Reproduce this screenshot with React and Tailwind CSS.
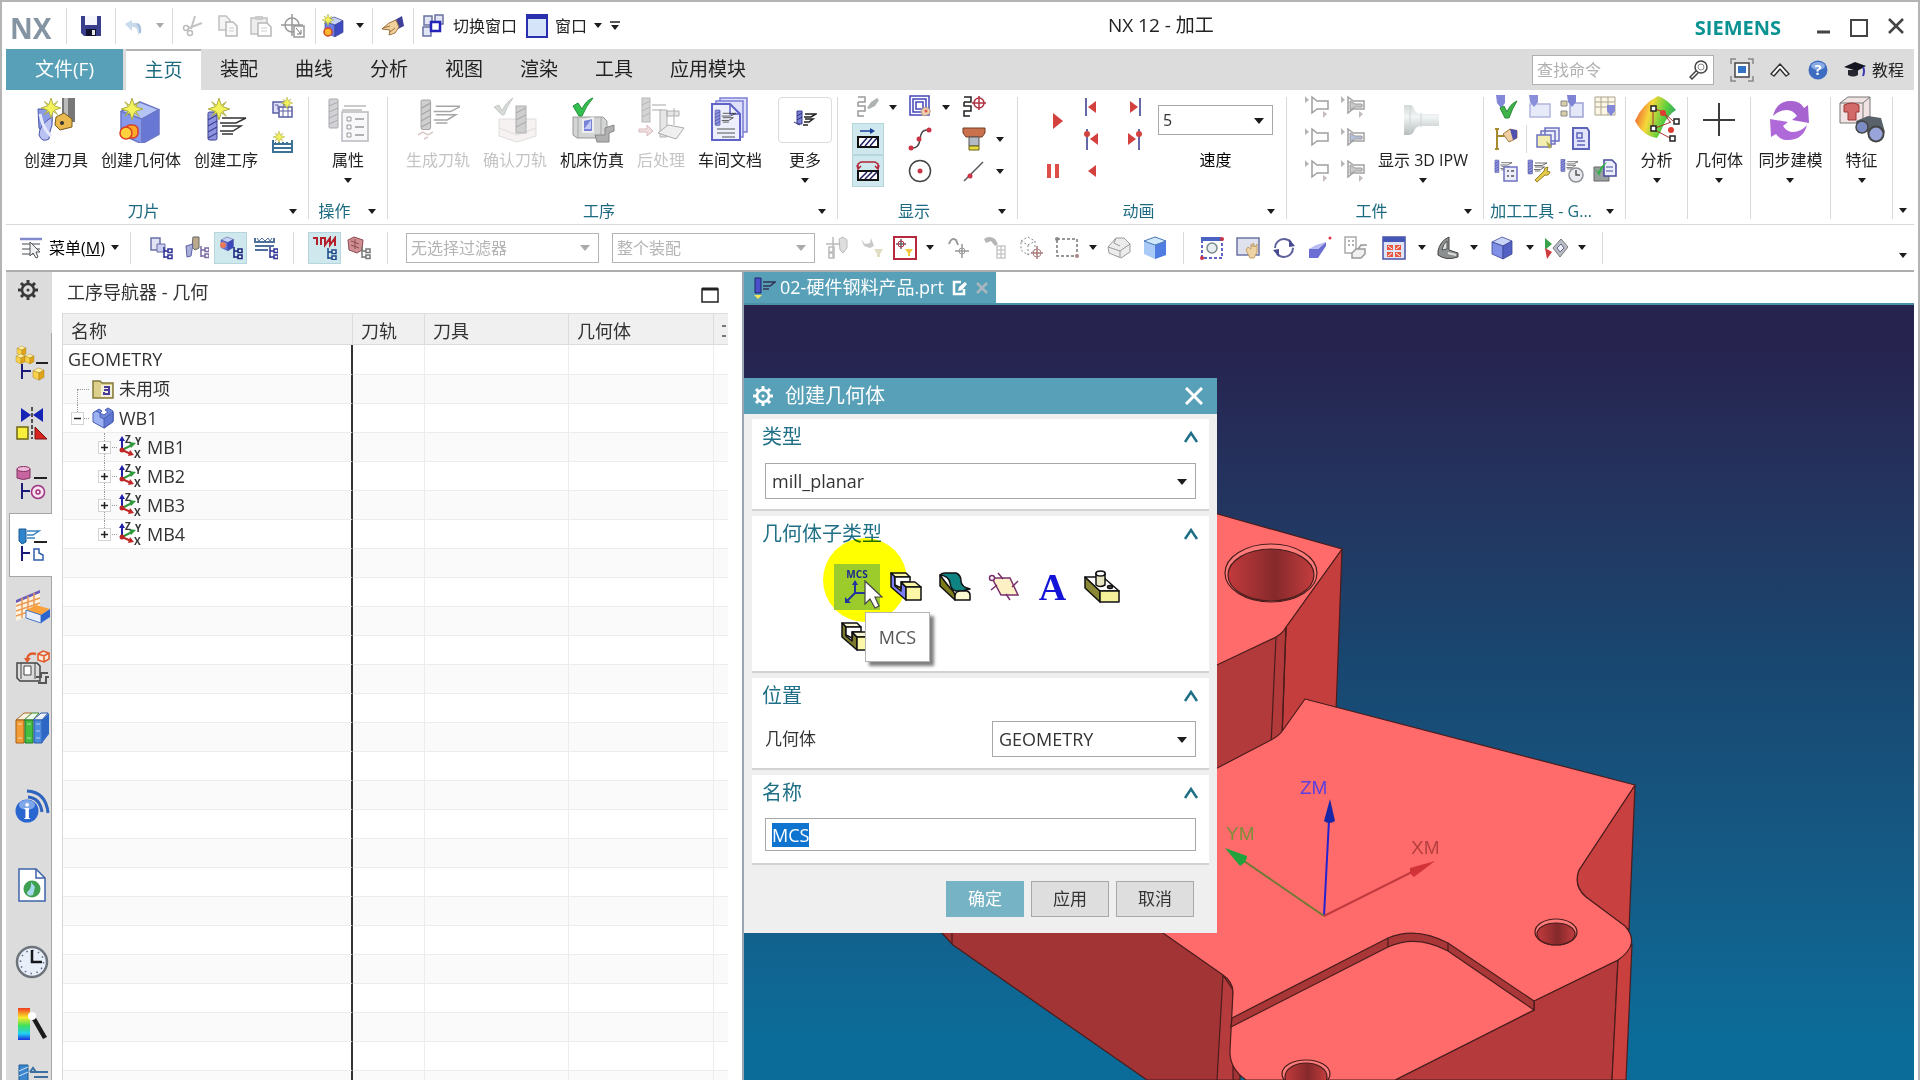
import React, { useEffect, useRef, useState } from 'react';
import clsx from 'clsx';

const STAR = 'M0 -9L2 -3L6 -6L3 -2L9 0L3 2L6 6L2 3L0 9L-2 3L-6 6L-3 2L-9 0L-3 -2L-6 -6L-2 -3Z';

/* ---------- drawing helpers ---------- */

function Icon({ w = 24, h, children }) {
	const height = h || w;
	return (
		<svg
			width={w}
			height={height}
			viewBox={`0 0 ${w} ${height}`}
			fill="none"
			className="block shrink-0"
			aria-hidden="true"
		>
			{children}
		</svg>
	);
}

function Caret({ color = '#1c1c1c', big }) {
	return big ? (
		<Icon w={12} h={7}>
			<path d="M1 1h10l-5 6z" fill={color} />
		</Icon>
	) : (
		<Icon w={8} h={5}>
			<path d="M0 0h8L4 5z" fill={color} />
		</Icon>
	);
}

const Star = ({ x, y, s = 1 }) => (
	<path d={STAR} transform={`translate(${x} ${y}) scale(${s})`} fill="#f3f25c" stroke="#a9a83c" strokeWidth="0.8" />
);

// spindle with the tool path lines beside it
const Mill = ({ x = 0, y = 0, s = 1, fill = '#8f94e0', dark = '#3c3f92', line = '#333' }) => (
	<g transform={`translate(${x} ${y}) scale(${s})`}>
		<rect x="2" y="0" width="9" height="28" rx="1.5" fill={fill} stroke={dark} />
		<path d="M2 8l9-5M2 14l9-5M2 20l9-5M2 26l9-5" stroke={dark} strokeWidth="1.2" />
		<path d="M16 6h24L30 11H14M16 14h19l-8 5H14M16 22h11" stroke={line} strokeWidth="1.4" />
	</g>
);

const TreeMark = ({ x, y, c = '#2d3192' }) => (
	<g transform={`translate(${x} ${y})`} stroke={c} strokeWidth="1.5">
		<path d="M1 0v11M1 4h4M1 10h4" />
		<rect x="5" y="2" width="4" height="3.5" fill="#fff" />
		<rect x="5" y="8" width="4" height="3.5" fill="#fff" />
	</g>
);

const Cube = ({ x = 0, y = 0, s = 1, top = '#c9d3f8', left = '#93a2ec', right = '#5a68c8', edge = '#3d4694' }) => (
	<g transform={`translate(${x} ${y}) scale(${s})`} stroke={edge} strokeWidth="0.8" strokeLinejoin="round">
		<path d="M10 0L20 4L11 9L0 5Z" fill={top} />
		<path d="M0 5L11 9V22L0 17Z" fill={left} />
		<path d="M11 9L20 4V17L11 22Z" fill={right} />
	</g>
);

/* ---------- large ribbon icons ---------- */

const CreateTool = () => (
	<Icon w={44} h={46}>
		<path d="M28 1h13v24H28z" fill="#777" />
		<path d="M30 1h4v24h-4z" fill="#bbb" />
		<path d="M22 20l8-4 8 6v8l-12 3-5-5z" fill="#e9b84e" stroke="#7a5a1c" />
		<circle cx="28" cy="26" r="2" fill="#333" />
		<path d="M4 12h14v12q-1 9-6 10t-7-3z" fill="#8b9be6" stroke="#4a55a8" />
		<path d="M5 38q0-10 13-18v8Q15 36 15 42q-7 4-10-4z" fill="#b9c2f2" stroke="#4a55a8" />
		<path d="M6 17q3 15 11 22" stroke="#e6e9fb" strokeWidth="3" />
		<Star x={17} y={11} s={1.1} />
	</Icon>
);
const CreateGeom = () => (
	<Icon w={46} h={46}>
		<Cube x={3} y={5} s={1.9} top="#b4c4f6" left="#8698ec" right="#6877d4" edge="#6c78c8" />
		<rect x="7" y="28" width="13" height="13" rx="5" fill="#ffa92b" stroke="#d93f26" strokeWidth="1.5" />
		<circle cx="8" cy="36" r="6" fill="#ffd23d" stroke="#d93f26" strokeWidth="1.5" />
		<Star x={14} y={12} s={1.2} />
	</Icon>
);
const CreateOp = () => (
	<Icon w={44} h={46}>
		<Mill x={2} y={15} s={1} />
		<Star x={15} y={12} s={1.2} />
	</Icon>
);
const Properties = () => (
	<Icon w={44} h={46}>
		<rect x="3" y="2" width="9" height="29" rx="1" fill="#d2d2d6" stroke="#a9a9ad" />
		<path d="M3 9l9-4M3 15l9-4M3 21l9-4M3 27l9-4" stroke="#aaa" />
		<path d="M18 9h22M16 13h20" stroke="#bbb" strokeWidth="1.5" />
		<rect x="16" y="15" width="26" height="29" fill="#f8f8fb" stroke="#b8b8c0" strokeWidth="1.5" />
		<path d="M21 20h4v4h-4zM21 28h4v4h-4zM21 36h4v4h-4z" stroke="#999" />
		<path d="M29 22h9M29 30h9M29 38h9" stroke="#999" strokeWidth="1.5" />
	</Icon>
);
const Generate = () => (
	<Icon w={44} h={46}>
		<Mill x={3} y={3} s={1.05} fill="#cfcfcf" dark="#a5a5a5" line="#a6a6a6" />
		<path d="M2 38l5-3 5 3 5-3M8 42l4-2" stroke="#dcc9c9" strokeWidth="1.5" />
	</Icon>
);
const Verify = () => (
	<Icon w={44} h={46}>
		<path d="M6 22h37v17l-19 6L6 39z" fill="#f6f2f2" stroke="#e0dcdc" />
		<path d="M6 31l18 7 19-7" stroke="#e2dcdc" />
		<rect x="23" y="9" width="10" height="27" fill="#cfcfcf" stroke="#b0b0b0" />
		<path d="M23 16l10-5M23 23l10-5M23 30l10-5" stroke="#a5a5a5" />
		<path d="M1 10l5-2 3 6Q13 5 20 1q-6 8-9 17H9z" fill="#d7dbd7" stroke="#c6cac6" />
	</Icon>
);
const MachineSim = () => (
	<Icon w={46} h={46}>
		<path d="M4 20h30l4 4v17H8l-4-3z" fill="#d3d4d4" stroke="#999" />
		<path d="M9 20v21M32 20v21" stroke="#a5a5a5" />
		<path d="M14 23l10-2v14H14z" fill="#7882d8" stroke="#eee" strokeWidth="2" />
		<path d="M15 32l7-9v9z" fill="#c3caf6" />
		<path d="M26 38h10v-7l9-3v6l-5 2v9H28z" fill="#b0b0b0" stroke="#888" />
		<path d="M4 9l5-3 4 6Q17 3 24 1 17 9 13 19h-3z" fill="#33c04f" stroke="#23903a" />
	</Icon>
);
const PostProcess = () => (
	<Icon w={46} h={46}>
		<rect x="4" y="1" width="8" height="24" fill="#d4d4d4" stroke="#b8b8b8" />
		<path d="M4 8l8-4M4 14l8-4M4 20l8-4" stroke="#b4b4b4" />
		<path d="M14 8h14M14 13h10" stroke="#c4c4c4" strokeWidth="1.5" />
		<path d="M22 13h7v27h-7zM29 14h12v5H29zM36 11v17" fill="#e6e6e6" stroke="#b0b0b0" />
		<path d="M20 36l10-8 16 3-8 11z" fill="#efefef" stroke="#ababab" />
		<path d="M1 32h8v-4l6 6-6 5v-4H1z" fill="#f1dede" stroke="#d8bcbc" />
	</Icon>
);
const ShopDoc = () => (
	<Icon w={44} h={46}>
		<path d="M12 1h27v34H12z" fill="#dedffb" stroke="#7b7fd4" strokeWidth="1.5" />
		<path d="M8 4h27v36H8z" fill="#dedffb" stroke="#7b7fd4" strokeWidth="1.5" />
		<path d="M4 7h18l10 10v26H4z" fill="#eeeffd" stroke="#5f63c6" strokeWidth="2" />
		<path d="M22 7v10h10" stroke="#5f63c6" strokeWidth="1.5" />
		<Mill x={6} y={13} s={0.55} />
		<path d="M9 32h18M9 36h18M14 40h13" stroke="#555" strokeWidth="1.2" />
	</Icon>
);
const More = () => (
	<Icon w={24}>
		<path d="M4 3h5v13H4z" fill="#7c80d6" stroke="#3c3f92" />
		<path d="M4 8l5-3M4 12l5-3M1 14l6 3" stroke="#2c2f72" />
		<path d="M12 6h11l-5 3h-7M12 11h8l-4 3h-5M10 17h5" stroke="#222" strokeWidth="1.5" />
	</Icon>
);
const ShowIpw = () => (
	<Icon w={44} h={46}>
		<defs>
			<linearGradient id="ipw" x1="0" y1="0" x2="0" y2="1">
				<stop offset="0" stopColor="#d4dad9" />
				<stop offset=".4" stopColor="#f2f5f5" />
				<stop offset="1" stopColor="#b4bcbb" />
			</linearGradient>
		</defs>
		<path d="M3 8h6q3 0 4 4 2 5 7 5h18v12H20q-5 0-7 5-2 4-5 4H3z" fill="url(#ipw)" />
		<path d="M9 8v30M20 16v14" stroke="#cdd4d3" />
	</Icon>
);
const Analysis = () => (
	<Icon w={46} h={48}>
		<defs>
			<linearGradient id="heat" x1="0" y1="0.3" x2="1" y2="0.6">
				<stop offset="0" stopColor="#ee5a36" />
				<stop offset=".35" stopColor="#f6d93a" />
				<stop offset=".7" stopColor="#58cf3e" />
				<stop offset="1" stopColor="#2f9e6e" />
			</linearGradient>
		</defs>
		<path d="M24 0q9 3 18 14-8 5-12 14-3 8-7 14Q9 40 1 25 8 8 24 0z" fill="url(#heat)" />
		<path d="M19 12l10 4 10 9M19 12v21l18-7M19 33l17 9M29 16l7 10" stroke="#a33" />
		<g fill="#fff" stroke="#222" strokeWidth="1.5">
			<path d="M17 10h5v5h-5zM17 30h5v5h-5zM40 23h5v5h-5zM36 40h5v5h-5z" />
		</g>
		<circle cx="29" cy="17" r="3" fill="#e03b30" />
		<circle cx="37" cy="34" r="3" fill="#e03b30" />
	</Icon>
);
const Plus = () => (
	<Icon w={32} h={46}>
		<path d="M16 6v33M0 23h32" stroke="#3c3c3c" strokeWidth="2" />
	</Icon>
);
const Sync = () => (
	<Icon w={44} h={46}>
		<path d="M5 19Q9 3 24 4q8 0 12 7l4-3 1 18-17-3 5-4q-4-6-10-6Q11 13 5 19z" fill="#a764d0" />
		<path d="M39 28Q35 43 20 43q-8 0-12-6l-5 3-1-18 18 3-5 4q4 6 10 6 8 0 14-7z" fill="#b069d8" />
	</Icon>
);
const Feature = () => (
	<Icon w={48} h={48}>
		<path d="M2 7l8-6h22v20l-7 6H2z" fill="#f1e3e3" stroke="#777" />
		<path d="M2 7h23v20M25 7l7-6" stroke="#777" />
		<path d="M6 9q8-4 15 0v7h-3v8h-8v-8H6z" fill="#d36a6a" stroke="#9c3434" />
		<path d="M18 25l12-5 13 2 4 14-8 9-8-4-3-8-8 4z" fill="#59616b" />
		<circle cx="24" cy="31" r="6" fill="#7d8cc4" stroke="#444" strokeWidth="1.5" />
		<circle cx="38" cy="38" r="7.500" fill="#98a4da" stroke="#444" strokeWidth="2" />
	</Icon>
);

/* ---------- small icons ---------- */

const I = {
	save: (
		<Icon w={22}>
			<path d="M1 1h20v20H4l-3-3z" fill="#3a3f8c" />
			<path d="M5 1h12v9H5z" fill="#f4f6fb" />
			<path d="M6 14h10v7H6z" fill="#10122c" />
			<path d="M12 15h3v5h-3z" fill="#e9e9e9" />
		</Icon>
	),
	undo: (
		<Icon w={20}>
			<path d="M1 8l7-4v3q10-2 9 8l-3 4q0-9-6-8v4z" fill="#c8daec" />
			<path d="M13 8q4 2 3 9" stroke="#a4bfdc" strokeWidth="2" />
		</Icon>
	),
	cut: (
		<Icon w={22}>
			<path d="M13 1L9 14M20 8L7 13" stroke="#c4c4c4" strokeWidth="2" />
			<circle cx="8" cy="18" r="2.500" stroke="#bdbdbd" strokeWidth="1.5" />
			<circle cx="4" cy="13" r="2.500" stroke="#bdbdbd" strokeWidth="1.5" />
		</Icon>
	),
	copy: (
		<Icon w={22}>
			<path d="M2 1h7l4 4v10H2z" fill="#f4f4f4" stroke="#c0c0c0" strokeWidth="1.5" />
			<path d="M9 7h7l4 4v10H9z" fill="#fafafa" stroke="#b8b8b8" strokeWidth="1.5" />
			<path d="M12 13h5M12 16h5" stroke="#ccc" />
		</Icon>
	),
	paste: (
		<Icon w={22}>
			<path d="M1 3h16v16H1z" fill="#ededed" stroke="#c0c0c0" strokeWidth="1.5" />
			<path d="M5 1h8v4H5z" fill="#ccc" />
			<path d="M8 8h9l4 4v9H8z" fill="#fff" stroke="#b8b8b8" strokeWidth="1.5" />
			<path d="M11 13h6M11 16h6" stroke="#ccc" />
		</Icon>
	),
	target: (
		<Icon w={24}>
			<circle cx="11" cy="11" r="7" stroke="#999" strokeWidth="1.5" />
			<path d="M11 0v22M0 11h22" stroke="#999" strokeWidth="1.5" />
			<path d="M13 12h10v11H13z" fill="#fff" stroke="#999" strokeWidth="1.5" />
			<path d="M15 14l5 6M20 16v4h-4" stroke="#777" />
		</Icon>
	),
	newBox: (
		<Icon w={24}>
			<Cube x={3} y={3} s={0.9} left="#6d7ce6" right="#3e4ac2" />
			<circle cx="6" cy="18" r="4" fill="#ffb62e" stroke="#d3422a" strokeWidth="1.500" />
			<Star x={6} y={6} s={0.65} />
		</Icon>
	),
	hand: (
		<Icon w={24}>
			<path d="M14 6l7-4 2 10-6 3z" fill="#3f3f9c" />
			<path d="M1 15l7-6 7-3 3 7-4 6-6 2 1-5z" fill="#f2d09c" stroke="#9a7140" />
			<path d="M2 14l7-2M9 18l5-4" stroke="#9a7140" />
		</Icon>
	),
	switchWin: (
		<Icon w={24}>
			<path d="M2 2h8v9H2zM13 1h8v9h-8zM1 13h8v9H1z" fill="#e2e6f5" stroke="#6a71a0" strokeWidth="1.5" />
			<path d="M9 8h9v9H9z" fill="#fff" stroke="#2424b8" strokeWidth="2.5" />
		</Icon>
	),
	win: (
		<Icon w={22} h={24}>
			<path d="M1 1h20v22H1z" fill="#d5e4f8" stroke="#2a2fae" strokeWidth="2" />
			<path d="M1 1h20v4H1z" fill="#2a2fae" />
		</Icon>
	),
	starGrid: (
		<Icon w={22}>
			<path d="M1 5h11v11H1z" fill="#dfe0f7" stroke="#5a5da4" strokeWidth="1.5" />
			<path d="M7 10h13v10H7z" fill="#fff" stroke="#5a5da4" strokeWidth="1.5" />
			<path d="M7 14h13M11 10v10M16 10v10M3 8h3v5" stroke="#5a5da4" />
			<Star x={15} y={6} s={0.65} />
		</Icon>
	),
	starMethod: (
		<Icon w={22}>
			<path d="M1 9v12h19V9M1 13h19M1 17h19" stroke="#3c7296" strokeWidth="2" />
			<path d="M3 11l2 2 2-2 2 2 2-2 2 2 2-2 2 2" stroke="#3c7296" />
			<Star x={7} y={6} s={0.65} />
		</Icon>
	),
	flashPath: (
		<Icon w={24}>
			<path d="M2 2h7v5H2M2 7v4h7v5H2v5h6" stroke="#999" strokeWidth="1.5" />
			<path d="M11 13l4-6 6-4 2 2-4 6-6 3z" fill="#aeb4b4" />
		</Icon>
	),
	palette: (
		<Icon w={24}>
			<path d="M2 1h19v19H2zM5 4h13v13H5zM8 7h7v7H8z" stroke="#4347b8" strokeWidth="1.5" />
			<path d="M13 16q2-5 7-3 4 3 1 6-4 3-7 1z" fill="#ecd0b0" stroke="#b98" />
			<circle cx="18" cy="16" r="1.500" fill="#e2574a" />
		</Icon>
	),
	pathTarget: (
		<Icon w={24}>
			<path d="M2 2h7v5H2M2 7v4h7v5H2v5h6" stroke="#222" strokeWidth="1.5" />
			<circle cx="17" cy="8" r="5" stroke="#b03040" strokeWidth="1.5" />
			<path d="M17 1v14M10 8h14" stroke="#b03040" strokeWidth="1.5" />
		</Icon>
	),
	hatch1: (
		<Icon w={24}>
			<path d="M4 4h12" stroke="#1b3f9c" strokeWidth="1.5" />
			<path d="M14 1l5 3-5 3z" fill="#1b3f9c" />
			<path d="M2 10h20v10H2z" fill="#fff" stroke="#111" strokeWidth="2" />
			<path d="M4 19l7-8M9 19l7-8M14 19l7-8" stroke="#1d1f60" strokeWidth="1.5" />
		</Icon>
	),
	hatch2: (
		<Icon w={24}>
			<path d="M2 9V5l3-2h14l3 2v4M1 6l1 4 3-3M23 6l-1 4-3-3" stroke="#b22335" strokeWidth="1.500" />
			<path d="M2 12h20v9H2z" fill="#fff" stroke="#111" strokeWidth="2" />
			<path d="M4 20l7-7M9 20l7-7M14 20l7-7" stroke="#1d1f60" strokeWidth="1.5" />
		</Icon>
	),
	spline: (
		<Icon w={24}>
			<path d="M3 21q8 1 9-9t8-9" stroke="#444" strokeWidth="1.5" />
			<g fill="#c93446">
				<circle cx="3" cy="21" r="2.500" />
				<circle cx="11" cy="12" r="2.500" />
				<circle cx="21" cy="3" r="2.500" />
			</g>
		</Icon>
	),
	toolHead: (
		<Icon w={24}>
			<path d="M1 1h22v5l-3 4H4L1 6z" fill="#c9714c" stroke="#713a22" />
			<path d="M7 10h10v9H7z" fill="#b4bac4" stroke="#555" />
			<path d="M7 19h10v4H7z" fill="#e9dc3c" stroke="#665f14" />
		</Icon>
	),
	circlePt: (
		<Icon w={24}>
			<circle cx="12" cy="12" r="10.500" stroke="#444" strokeWidth="1.5" />
			<circle cx="12" cy="12" r="2.500" fill="#c93446" />
		</Icon>
	),
	linePt: (
		<Icon w={24}>
			<path d="M2 22L21 3" stroke="#555" strokeWidth="1.5" />
			<circle cx="8" cy="17" r="2.500" fill="#c93446" />
		</Icon>
	),
	play: (
		<Icon w={14} h={18}>
			<path d="M2 1l10 8-10 8z" fill="#d3413f" />
		</Icon>
	),
	first: (
		<Icon w={16} h={20}>
			<path d="M3 1v18" stroke="#33358c" strokeWidth="1.5" />
			<path d="M13 4L5 10l8 6z" fill="#d3413f" />
		</Icon>
	),
	last: (
		<Icon w={16} h={20}>
			<path d="M13 1v18" stroke="#33358c" strokeWidth="1.5" />
			<path d="M3 4l8 6-8 6z" fill="#d3413f" />
		</Icon>
	),
	prevOp: (
		<Icon w={16} h={22}>
			<path d="M4 1v21" stroke="#33358c" strokeWidth="1.5" />
			<circle cx="4" cy="6" r="3" fill="#d3413f" />
			<path d="M15 5l-8 6 8 6z" fill="#d3413f" />
		</Icon>
	),
	nextOp: (
		<Icon w={16} h={22}>
			<path d="M12 1v21" stroke="#33358c" strokeWidth="1.5" />
			<circle cx="12" cy="6" r="3" fill="#d3413f" />
			<path d="M1 5l8 6-8 6z" fill="#d3413f" />
		</Icon>
	),
	pause: (
		<Icon w={22} h={16}>
			<path d="M0 1h4v14H0zM8 1h4v14H8z" fill="#dd4e4a" />
		</Icon>
	),
	back: (
		<Icon w={14} h={14}>
			<path d="M12 1L4 7l8 6z" fill="#d3413f" />
		</Icon>
	),
	lens: (
		<Icon w={20} h={20}>
			<circle cx="12" cy="7" r="6" stroke="#444" strokeWidth="1.5" />
			<circle cx="12" cy="7" r="3" stroke="#888" />
			<path d="M7 11l-6 6 2 2 6-6" stroke="#444" strokeWidth="1.5" />
		</Icon>
	),
	fullscreen: (
		<Icon w={24}>
			<path d="M1 6V1h5M18 1h5v5M23 18v5h-5M6 23H1v-5" stroke="#888" strokeWidth="1.5" />
			<path d="M5 5h14v14H5z" fill="#fff" stroke="#444" strokeWidth="1.5" />
			<path d="M8 8h8v7H8z" fill="#3373c4" />
		</Icon>
	),
	chevrons: (
		<Icon w={20} h={16}>
			<path d="M1 12l9-10 9 10-3 2-6-7-6 7z" fill="#fff" stroke="#333" strokeWidth="1.500" strokeLinejoin="round" />
		</Icon>
	),
	help: (
		<Icon w={20}>
			<circle cx="10" cy="10" r="9.500" fill="#3d6cc0" />
			<ellipse cx="10" cy="6" rx="7" ry="4" fill="#88abe4" />
			<text x="10" y="15" textAnchor="middle" fontSize="15" fontWeight="700" fill="#fff">
				?
			</text>
		</Icon>
	),
	cap: (
		<Icon w={22} h={18}>
			<path d="M0 6l11-5 11 4-9 5z" fill="#141420" />
			<path d="M4 9v5q5 3 10 0V9" fill="#26262e" />
			<path d="M19 6q2 4 0 9" stroke="#3b38b0" strokeWidth="2" />
		</Icon>
	),
	menu: (
		<Icon w={24}>
			<path d="M1 3h22M3 8h18M3 13h18M3 18h14" stroke="#a0a4a9" strokeWidth="2" />
			<path d="M1 3h22" stroke="#8289cc" strokeWidth="2.500" />
			<path d="M11 6v14l3-3 3 5 2-1-2-5h4z" fill="#eef0f2" stroke="#555" />
		</Icon>
	),
	navOrder: (
		<Icon w={24}>
			<path d="M2 2h9v12H2z" fill="#e2e4f6" stroke="#6a6fa6" strokeWidth="1.5" />
			<path d="M8 8h8v8H8z" fill="#c9cdf0" stroke="#6a6fa6" />
			<TreeMark x={14} y={11} />
		</Icon>
	),
	navTool: (
		<Icon w={24}>
			<path d="M8 1h6v11l-4 2-3-3z" fill="#bca98c" stroke="#666" />
			<path d="M1 10l7-2-2 12-4 1z" fill="#a9b0dc" stroke="#5a60a0" />
			<TreeMark x={15} y={10} c="#7a6aa0" />
		</Icon>
	),
	navGeom: (
		<Icon w={24}>
			<Cube x={2} y={1} s={0.62} left="#6474dc" right="#3c49bc" />
			<circle cx="4" cy="9" r="3" fill="#ec7a5a" />
			<TreeMark x={14} y={11} c="#16257c" />
		</Icon>
	),
	navMethod: (
		<Icon w={24}>
			<path d="M1 2v4h19V2M1 10h19M1 14h13" stroke="#4f719c" strokeWidth="2" />
			<path d="M3 2l2 3 3-3 3 3 3-3 2 3 2-3" stroke="#4f719c" />
			<TreeMark x={15} y={11} />
		</Icon>
	),
	wave: (
		<Icon w={24}>
			<path d="M0 2h4v7M8 9V2h4v7l5-7v7l5-7v8" stroke="#b3202c" strokeWidth="2" />
			<TreeMark x={14} y={12} c="#1b4a86" />
		</Icon>
	),
	rough: (
		<Icon w={24}>
			<path d="M1 4l6-3 9 3-1 10-5 3-8-3z" fill="#cf8f92" stroke="#8c4a50" />
			<path d="M4 5l8 3M4 9l8 3M8 3v10" stroke="#8c4a50" />
			<TreeMark x={14} y={11} c="#777" />
		</Icon>
	),
	selA: (
		<Icon w={24}>
			<path d="M8 1v20M1 8h13M4 11h5v5H4zM4 17h5v5H4z" stroke="#bbb" strokeWidth="1.500" />
			<path d="M14 3l4-2 4 3v8l-4 5-3-3z" fill="#ddd" stroke="#bbb" />
		</Icon>
	),
	selB: (
		<Icon w={24}>
			<path d="M0 3l4 5 5-1 1-5 3 8-4 2-6-2z" fill="#c9c9c9" />
			<path d="M13 13h9l-3 5v3h-3v-3z" fill="#e1dcc4" />
		</Icon>
	),
	snap: (
		<Icon w={24}>
			<path d="M1 1h22v22H1z" fill="#fff" stroke="#b6283e" strokeWidth="2" />
			<path d="M8 3v10M3 8h10" stroke="#666" strokeWidth="1.500" />
			<circle cx="8" cy="8" r="3" stroke="#b6283e" />
			<path d="M12 13h8l-3 4v3h-2v-3z" fill="#f2c53c" />
		</Icon>
	),
	rotAxis: (
		<Icon w={24}>
			<path d="M2 8q2-7 7-4l2 5" stroke="#9a9a9a" strokeWidth="2" />
			<path d="M15 8v14M8 15h14" stroke="#999" strokeWidth="1.5" />
			<circle cx="15" cy="15" r="3" stroke="#999" />
		</Icon>
	),
	dispA: (
		<Icon w={24}>
			<path d="M1 3q5-4 11 0l3 5-3 2-4-5-5 2z" fill="#b5b5b5" />
			<path d="M14 10h8v12h-8zM14 14h8M14 18h8M18 10v12" stroke="#c9c9c9" strokeWidth="1.500" />
		</Icon>
	),
	cubePick: (
		<Icon w={24}>
			<path d="M2 5l7-4 7 4v9l-7 5-7-5zM2 5l7 4 7-4M9 9v10" stroke="#8a8a8a" strokeDasharray="2 2" />
			<path d="M18 10v13M12 17h12" stroke="#a77" strokeWidth="1.5" />
			<circle cx="18" cy="17" r="4" stroke="#a88" />
		</Icon>
	),
	marquee: (
		<Icon w={24}>
			<path d="M2 3h20v17H2z" stroke="#777" strokeWidth="1.500" strokeDasharray="3 2" />
			<circle cx="2" cy="3" r="2" fill="#888" />
			<circle cx="22" cy="20" r="2" fill="#a88" />
		</Icon>
	),
	shadeGrey: (
		<Icon w={24}>
			<path d="M1 11l8-9h8l6 6v8l-9 6-12-5z" fill="#ececec" stroke="#999" />
			<path d="M1 11l12 4 10-7M13 15v6M9 2l-2 5 6 3" stroke="#999" />
		</Icon>
	),
	blueBox: (
		<Icon w={24}>
			<path d="M1 5l11-4 11 4v14l-11 4-11-5z" fill="#a9c9f6" />
			<path d="M12 9l11-4v14l-11 4z" fill="#4f7de2" />
			<path d="M1 5l11-4 11 4-11 4z" fill="#d2e9fb" stroke="#4a79b8" />
		</Icon>
	),
	zoomFit: (
		<Icon w={24}>
			<path d="M2 2h20v20H2z" stroke="#2a2fae" strokeWidth="1.5" strokeDasharray="3 2" />
			<path d="M1 1h20v4H1z" fill="#4a62c2" />
			<circle cx="12" cy="12" r="5" fill="#e6edf0" stroke="#7a8a8a" strokeWidth="1.500" />
			<circle cx="2" cy="22" r="2" fill="#c93446" />
			<circle cx="22" cy="3" r="2" fill="#c93446" />
		</Icon>
	),
	pan: (
		<Icon w={24}>
			<path d="M1 2h22v17H1z" fill="#dfe1ee" stroke="#6e73a4" strokeWidth="1.5" />
			<path d="M12 11l3 2V8l2 3V7l2 4 2-3v8l-3 6h-4l-4-8z" fill="#eed3a4" stroke="#c39f68" />
		</Icon>
	),
	rotate: (
		<Icon w={24}>
			<circle cx="12" cy="12" r="9" stroke="#5d619c" strokeWidth="2" strokeDasharray="22 6" />
			<path d="M17 3l6 7-6 1zM7 21l-6-7 6-1z" fill="#474c92" />
		</Icon>
	),
	persp: (
		<Icon w={24}>
			<path d="M1 13h9l8-7v4l-8 12H1z" fill="#6b6ed2" />
			<path d="M1 13h9l8-7-10 3z" fill="#b8baf2" />
			<circle cx="22" cy="2" r="1.500" fill="#d34" />
		</Icon>
	),
	listEdit: (
		<Icon w={24}>
			<path d="M1 1h11v16H1z" fill="#fff" stroke="#aaa" strokeWidth="1.5" />
			<path d="M4 5h2M8 5h2M4 9h2M8 9h2" stroke="#999" strokeWidth="1.500" />
			<path d="M8 17l4-4h9v5l-4 4H8zM14 13l3-4h6" fill="#f0f0f0" stroke="#999" strokeWidth="1.5" />
		</Icon>
	),
	fourWin: (
		<Icon w={24}>
			<path d="M1 1h22v22H1z" fill="#dfe4f6" stroke="#4a50a8" strokeWidth="1.5" />
			<path d="M1 1h22v5H1z" fill="#4557b4" />
			<path d="M5 9h6v5H5zM13 9h6v5h-6zM5 16h6v5H5zM13 16h6v5h-6z" fill="#e9573f" />
			<path d="M6 10l4 3M18 10l-4 3M6 20l4-3M18 20l-4-3" stroke="#fff" />
		</Icon>
	),
	clip: (
		<Icon w={24}>
			<path d="M2 15q2-10 11-14v13l9 3v4q-12 4-20-2z" fill="#8b8f8f" stroke="#444" />
			<path d="M6 14q1-6 5-9v8z" fill="#dcdede" stroke="#555" />
			<path d="M12 17l8 2" stroke="#ddd" strokeWidth="2" />
		</Icon>
	),
	solid: (
		<Icon w={24}>
			<Cube x={2} y={1} s={1} left="#7f90e6" right="#5361c4" />
		</Icon>
	),
	sect: (
		<Icon w={24}>
			<path d="M1 2l7 6-7 6z" fill="#3aa24a" />
			<path d="M1 12l7 4-5 7z" fill="#d0393c" />
			<path d="M9 12l8-9 7 8-8 10z" fill="#b8bcc4" stroke="#777" />
			<path d="M13 12l4-4 3 4-4 4z" fill="#eef" stroke="#668" />
		</Icon>
	),
};

const Ipw = ({ inner, bottom = true }) => (
	<Icon w={24}>
		<path d="M0 1v7l4-3z" fill="#b5b5b5" />
		<path d="M7 2l5 4h11v8H12l-5 4z" stroke="#a0a0a0" strokeWidth="1.5" />
		{inner && <path d="M9 6l5 3h7v3h-7l-5 3z" fill={inner} stroke="#999" />}
		{bottom && <path d="M18 16l4 3-4 4z" fill="#c4bcbc" />}
	</Icon>
);

const ToolMini = ({ kind }) => (
	<Icon w={24}>
		{kind === 'check' && (
			<>
				<path d="M2 0h9v8l-4 5-4-5z" fill="#8287d8" />
				<path d="M6 13l4-2 3 6q3-8 10-11-5 8-8 17h-4z" fill="#3fb44a" stroke="#2a8a38" />
			</>
		)}
		{kind === 'block' && (
			<>
				<path d="M3 9h20v13H3z" fill="#e7eaf8" stroke="#b3b7dd" strokeWidth="1.500" />
				<path d="M2 0h9v7l-4 5-4-5z" fill="#8a8fdc" />
			</>
		)}
		{kind === 'stack' && (
			<>
				<path d="M10 8h13v14H10z" fill="#e4e7f8" stroke="#9fa4d4" strokeWidth="1.500" />
				<path d="M1 6h6v5H1zM1 16h6v5H1z" fill="#d8cfa8" stroke="#888" />
				<path d="M7 0h9v7l-4 5-4-5z" fill="#7e83d4" />
			</>
		)}
		{kind === 'sheet' && (
			<>
				<path d="M2 2h20v18H2zM2 7h20M2 12h20M8 2v18M15 2v18" fill="#fbf7e4" stroke="#a9a58e" />
				<path d="M14 10h8v6l-4 5-4-5z" fill="#8287d8" />
			</>
		)}
		{kind === 'gauge' && (
			<>
				<path d="M3 2v20M1 2h4M1 22h4M3 9h8" stroke="#a58b2e" strokeWidth="2" />
				<path d="M9 7l7-5 7 2v7l-8 4z" fill="#efcf9f" stroke="#a37b42" />
				<path d="M16 2l7 1v8l-4 2z" fill="#504fae" />
			</>
		)}
		{kind === 'layers' && (
			<>
				<path d="M9 1h14v13H9zM5 4h14v13H5z" fill="#eceefb" stroke="#6d72c2" strokeWidth="1.500" />
				<path d="M1 8h14v12H1z" fill="#f2edb0" stroke="#6d72c2" strokeWidth="1.500" />
				<path d="M10 14l3 8 3-3z" fill="#a8a43e" />
			</>
		)}
		{kind === 'doc' && (
			<>
				<path d="M4 1h14l2 3v18H4z" fill="#e2e4fb" stroke="#5d62ba" strokeWidth="2" />
				<path d="M8 6h5v5H8zM8 14h8M8 18h8" stroke="#5d62ba" strokeWidth="1.500" />
			</>
		)}
		{kind === 'millList' && (
			<>
				<Mill s={0.45} x={0} y={1} />
				<path d="M10 8h13v14H10z" fill="#eceefb" stroke="#6d72c2" strokeWidth="1.500" />
				<path d="M13 12h2M17 12h3M13 17h2M17 17h3" stroke="#555" strokeWidth="1.500" />
			</>
		)}
		{kind === 'wrench' && (
			<>
				<Mill s={0.5} x={0} y={1} />
				<path d="M8 21l9-9q0-4 4-4l-1 4 3 1q-1 4-5 3l-8 7z" fill="#e4c94a" stroke="#94802a" />
			</>
		)}
		{kind === 'clock' && (
			<>
				<Mill s={0.45} x={0} y={0} />
				<circle cx="16" cy="16" r="7" fill="#e9ebee" stroke="#8d9096" strokeWidth="1.500" />
				<path d="M16 11v5h4" stroke="#555" strokeWidth="1.500" />
			</>
		)}
		{kind === 'report' && (
			<>
				<path d="M1 8h15v14H1z" fill="#999e9e" stroke="#666" />
				<path d="M11 1h8l4 4v12H11z" fill="#eceefb" stroke="#45499c" strokeWidth="1.500" />
				<path d="M13 8h7M13 12h7" stroke="#45499c" />
				<path d="M1 8l4 5Q9 5 14 3 9 9 6 17z" fill="#37b34a" />
			</>
		)}
	</Icon>
);

/* ---------- resource bar icons ---------- */

const R = {
	assembly: (
		<Icon w={36}>
			<Cube x={3} y={1} s={0.45} top="#fff0a0" left="#f8d24a" right="#dfa51c" edge="#a37610" />
			<Cube x={2} y={9} s={0.45} top="#fff0a0" left="#f8d24a" right="#dfa51c" edge="#a37610" />
			<Cube x={11} y={9} s={0.45} top="#fff0a0" left="#f8d24a" right="#dfa51c" edge="#a37610" />
			<path d="M22 18h12" stroke="#222" strokeWidth="2" />
			<path d="M8 19v15M8 26h9" stroke="#1a1c78" strokeWidth="2" />
			<Cube x={19} y={23} s={0.55} top="#fff0a0" left="#f8d24a" right="#dfa51c" edge="#a37610" />
		</Icon>
	),
	constraint: (
		<Icon w={36}>
			<path d="M7 3l10 7-10 7zM29 3l-10 7 10 7z" fill="#1524b4" />
			<path d="M18 2v32" stroke="#222" strokeWidth="1.5" strokeDasharray="4 2" />
			<path d="M3 22h11v12H3z" fill="#f8ee3c" stroke="#6d6614" strokeWidth="1.500" />
			<path d="M21 22l12 12H21z" fill="#d8231e" stroke="#7c120f" />
		</Icon>
	),
	part: (
		<Icon w={36}>
			<path d="M3 4v9q6 3 13 0V4z" fill="#c765a0" stroke="#863368" />
			<ellipse cx="9.500" cy="4" rx="6.500" ry="2.500" fill="#f0b6d9" stroke="#863368" />
			<path d="M20 13h13" stroke="#222" strokeWidth="2" />
			<path d="M8 18v16M8 26h8" stroke="#1a1c78" strokeWidth="2" />
			<circle cx="24" cy="27" r="6.500" stroke="#a1327e" strokeWidth="1.500" fill="#f7e4f1" />
			<circle cx="24" cy="27" r="2" stroke="#a1327e" strokeWidth="1.500" />
		</Icon>
	),
	opNav: (
		<Icon w={36}>
			<path d="M5 2h7v13l-4 2-3-3z" fill="#2f84cc" stroke="#1d5d96" />
			<path d="M13 4h12l-6 4h-6M13 11h8" stroke="#3a82c0" strokeWidth="1.500" />
			<path d="M20 15h13" stroke="#222" strokeWidth="2" />
			<path d="M8 19v15M8 26h8" stroke="#1a1c78" strokeWidth="2" />
			<path d="M20 22h5v4l4 2v5h-9z" stroke="#315eae" strokeWidth="1.500" fill="#fff" />
		</Icon>
	),
	table: (
		<Icon w={36}>
			<path d="M2 11L26 1v20L2 32z" fill="#fff3df" />
			<path d="M2 11L26 1v3L2 14z" fill="#6a5cb8" />
			<path d="M2 17l24-8M2 22l24-8M2 27l24-8M8 9v20M14 7v20M20 4v20" stroke="#e89a56" strokeWidth="1.500" />
			<path d="M12 21l10-5 14 4-9 6z" fill="#f9a13a" />
			<path d="M12 21l15 5v8l-15-5z" fill="#e7eefa" stroke="#4a76c4" />
			<path d="M27 26l9-6v8l-9 6z" fill="#2b64cc" />
		</Icon>
	),
	machine: (
		<Icon w={36}>
			<path d="M3 13h20l3 3v15H6l-3-3z" fill="#ddd" stroke="#444" strokeWidth="1.500" />
			<path d="M7 13v16M21 13v16M10 16h7v9h-7z" fill="#fff" stroke="#444" />
			<path d="M22 27h5v-4h7M24 33h8v-6h3" stroke="#555" strokeWidth="2" />
			<path d="M22 4q-8-2-9 5" stroke="#e05a2b" strokeWidth="2.500" />
			<path d="M10 8h7l-4 5z" fill="#e05a2b" />
			<path d="M24 4l5-3 6 2v6l-5 3-6-2zM24 4l6 2 5-3M30 6v6" stroke="#e05a2b" strokeWidth="1.500" fill="#ffe7d3" />
		</Icon>
	),
	books: (
		<Icon w={36}>
			<path d="M2 9l8-7h8l-7 7z" fill="#f8efdf" stroke="#a86b24" />
			<path d="M2 9h8v23H2z" fill="#f39c35" stroke="#a35c14" />
			<path d="M10 9l8-7h7l-6 7z" fill="#effaea" stroke="#3c8a33" />
			<path d="M11 9h8v23h-8z" fill="#45bd3e" stroke="#23782a" />
			<path d="M19 9l8-7h7l-6 7z" fill="#eef3fc" stroke="#2d5aa4" />
			<path d="M20 9h8v23h-8z" fill="#4b8be0" stroke="#2d5aa4" />
			<path d="M28 9l7-7v21l-7 9z" fill="#2e66c4" />
			<path d="M4 13h4M4 27h4M13 13h4M13 27h4M22 13h4M22 20h4M22 27h4" stroke="#fff" opacity=".6" />
		</Icon>
	),
	info: (
		<Icon w={36}>
			<path d="M13 3q19 1 21 22M14 9q12 1 14 15" stroke="#2e63be" strokeWidth="3" />
			<circle cx="13" cy="23" r="11.500" fill="#2a66cf" />
			<ellipse cx="13" cy="17" rx="8" ry="5" fill="#7fa7ea" />
			<text
				x="13"
				y="31"
				textAnchor="middle"
				fontSize="24"
				fontWeight="700"
				fontFamily="Liberation Serif, serif"
				fill="#fff"
			>
				i
			</text>
		</Icon>
	),
	web: (
		<Icon w={36}>
			<path d="M5 2h17l9 9v23H5z" fill="#fff" stroke="#3f63a8" strokeWidth="1.500" />
			<path d="M22 2v9h9" stroke="#3f63a8" strokeWidth="1.500" />
			<circle cx="18" cy="22" r="8.500" fill="#3fa052" />
			<path d="M17 15l4 5-2 8q-6 2-6-3 5-3 4-10z" fill="#a7d9ee" />
		</Icon>
	),
	history: (
		<Icon w={36}>
			<circle cx="18" cy="18" r="15" fill="#e9eff8" stroke="#6d737a" strokeWidth="2.500" />
			<circle cx="18" cy="18" r="11.500" stroke="#5b6b88" strokeDasharray="1.500 4.500" strokeWidth="1.500" />
			<path d="M18 6v12h10" stroke="#16181c" strokeWidth="2.500" />
		</Icon>
	),
	wand: (
		<Icon w={36}>
			<defs>
				<linearGradient id="spec" x1="0" y1="0" x2="0" y2="1">
					<stop offset="0" stopColor="#f03a20" />
					<stop offset=".3" stopColor="#fae92a" />
					<stop offset=".55" stopColor="#3fe05a" />
					<stop offset=".8" stopColor="#1fd0f0" />
					<stop offset="1" stopColor="#1a2fe0" />
				</linearGradient>
			</defs>
			<path d="M4 2h12v32H4z" fill="url(#spec)" />
			<path d="M17 12l5 0 11 19-4 2z" fill="#1a1a1a" />
			<circle cx="18" cy="10" r="4" fill="#fff" />
		</Icon>
	),
	post: (
		<Icon w={36}>
			<path d="M5 1h9v20H5z" fill="#3b86cc" stroke="#1d5d96" />
			<path d="M5 7l9-4M5 12l9-4" stroke="#d0e5f7" />
			<path d="M16 8l3-4 3 4M16 8h18M20 13h14" stroke="#3a6fa0" strokeWidth="2" />
		</Icon>
	),
};

/* ---------- shared controls ---------- */

function BigButton({ icon, label, drop, disabled, boxed }) {
	return (
		<button
			type="button"
			disabled={disabled}
			className={clsx('flex flex-col items-center whitespace-nowrap', disabled ? 'text-[#c4c4c4]' : 'text-[#222]')}
		>
			<span
				className={clsx(
					'flex h-[46px] items-center justify-center',
					boxed && 'w-[54px] rounded border border-[#dcdcdc]'
				)}
			>
				{icon}
			</span>
			<span className="mt-[7px] text-[16px] leading-5">{label}</span>
			{drop && (
				<span className="mt-2">
					<Caret />
				</span>
			)}
		</button>
	);
}

function Tool({ icon, label, active, className = 'w-9' }) {
	return (
		<button
			type="button"
			aria-label={label}
			className={clsx(
				'flex h-8 shrink-0 items-center justify-center',
				className,
				active && 'border border-[#b5d6dd] bg-[#cfe8ed]'
			)}
		>
			{icon}
		</button>
	);
}

function Drop({ className = 'w-4', color }) {
	return (
		<button type="button" aria-label="更多选项" className={clsx('flex h-5 shrink-0 items-center justify-center', className)}>
			<Caret color={color} />
		</button>
	);
}

function Sep({ className = 'h-9' }) {
	return <span className={clsx('w-px shrink-0 bg-[#dadada]', className)} />;
}

function Select({ id, label, value, className, selectClass, caret }) {
	return (
		<span className={clsx('relative block', className)}>
			<select
				id={id}
				aria-label={label}
				defaultValue={value}
				className={clsx('block h-full w-full appearance-none border bg-white outline-none', selectClass)}
			>
				<option>{value}</option>
			</select>
			<span className="pointer-events-none absolute inset-y-0 right-2 flex items-center">{caret}</span>
		</span>
	);
}

function Group({ label, className, children, drop = true }) {
	return (
		<section className={clsx('flex h-[122px] shrink-0 flex-col border-r border-[#dadada]', className)}>
			<div className="flex flex-1">{children}</div>
			{label && (
				<div className="flex h-4 items-center text-[16px] leading-4 text-[#1b6a80]">
					<span className="flex-1 text-center whitespace-nowrap">{label}</span>
					{drop && <Drop className="mr-[3px] w-6" />}
				</div>
			)}
		</section>
	);
}

/* ---------- bars ---------- */

function TitleBar() {
	return (
		<header className="flex h-[47px] shrink-0 items-center text-[16px] text-[#222]">
			<span className="w-[60px] pt-1 pl-1 text-[28px] leading-8 font-bold text-[#8494a2]">NX</span>
			<Sep />
			<Tool icon={I.save} label="保存" className="w-12" />
			<Sep />
			<Tool icon={I.undo} label="撤消" />
			<Drop color="#aaa" />
			<Sep className="ml-1 h-9" />
			<Tool icon={I.cut} label="剪切" className="w-10" />
			<Tool icon={I.copy} label="复制" className="w-[30px]" />
			<Tool icon={I.paste} label="粘贴" />
			<Tool icon={I.target} label="重复命令" className="w-7" />
			<Sep className="ml-2 h-9" />
			<Tool icon={I.newBox} label="新建" />
			<Drop />
			<Sep className="ml-1 h-9" />
			<Tool icon={I.hand} label="触控模式" className="w-10" />
			<Sep />
			<button type="button" className="ml-2 flex items-center gap-[7px] whitespace-nowrap">
				{I.switchWin}
				切换窗口
			</button>
			<button type="button" className="ml-[9px] flex items-center gap-[7px] whitespace-nowrap">
				{I.win}
				窗口
				<Caret />
			</button>
			<button type="button" aria-label="工具栏选项" className="ml-2">
				<Icon w={10} h={10}>
					<path d="M0 1h10" stroke="#222" strokeWidth="1.5" />
					<path d="M1 4h8l-4 5z" fill="#222" />
				</Icon>
			</button>
			<h1 className="ml-auto pr-[481px] text-[19px] whitespace-nowrap">NX 12 - 加工</h1>
			<span className="mr-9 pt-1 text-[20px] font-bold text-[#0b9292]">SIEMENS</span>
			<div className="flex items-center gap-5 pr-[10px]">
				<button type="button" aria-label="最小化" className="pt-3">
					<Icon w={13} h={4}>
						<path d="M0 2h13" stroke="#444" strokeWidth="3" />
					</Icon>
				</button>
				<button type="button" aria-label="最大化" className="pt-1">
					<Icon w={18}>
						<path d="M1 1h16v16H1z" stroke="#444" strokeWidth="2" />
					</Icon>
				</button>
				<button type="button" aria-label="关闭">
					<Icon w={16}>
						<path d="M1 1l14 14M15 1L1 15" stroke="#444" strokeWidth="2.500" />
					</Icon>
				</button>
			</div>
		</header>
	);
}

const tabs = ['装配', '曲线', '分析', '视图', '渲染', '工具', '应用模块'];

function TabBar() {
	return (
		<nav className="flex h-[41px] shrink-0 items-stretch bg-[#dcdcdc] text-[19px] text-[#222]">
			<button type="button" className="w-[117px] bg-[#57a0b8] text-white">
				文件(F)
			</button>
			<button type="button" className="ml-[3px] w-[75px] border-t-2 border-[#b4b4b4] bg-white text-[#1b6a80]">
				主页
			</button>
			<div className="ml-px flex gap-px">
				{tabs.map((t) => (
					<button type="button" key={t} className="px-[18px] whitespace-nowrap">
						{t}
					</button>
				))}
			</div>
			<div className="ml-auto flex items-center">
				<label className="flex h-[30px] w-[182px] items-center border border-[#b0b0b0] bg-white px-1">
					<input
						type="search"
						aria-label="查找命令"
						placeholder="查找命令"
						className="min-w-0 flex-1 text-[16px] outline-none placeholder:text-[#b0b0b0]"
					/>
					{I.lens}
				</label>
				<button type="button" aria-label="全屏" className="ml-4">
					{I.fullscreen}
				</button>
				<button type="button" aria-label="最小化功能区" className="ml-4">
					{I.chevrons}
				</button>
				<button type="button" aria-label="帮助" className="ml-[18px]">
					{I.help}
				</button>
				<a href="#tutorial" className="ml-4 flex items-center gap-[6px] pr-[10px] text-[16px]">
					{I.cap}
					教程
				</a>
			</div>
		</nav>
	);
}

function Ribbon() {
	const [cellA, cellB] = ['#c9c9c9', '#b4c0dc'];
	return (
		<div className="flex h-[135px] shrink-0 border-b border-[#dadada] bg-white pt-[7px]">
			<Group label="刀片" className="w-[303px]">
				<div className="flex gap-[13px] pl-[18px]">
					<BigButton icon={<CreateTool />} label="创建刀具" />
					<BigButton icon={<CreateGeom />} label="创建几何体" />
					<BigButton icon={<CreateOp />} label="创建工序" />
				</div>
				<div className="ml-[14px] flex flex-col gap-3">
					<button type="button" aria-label="创建程序">
						{I.starGrid}
					</button>
					<button type="button" aria-label="创建方法">
						{I.starMethod}
					</button>
				</div>
			</Group>
			<Group label="操作" className="w-[79px]">
				<div className="flex flex-1 justify-center">
					<BigButton icon={<Properties />} label="属性" drop />
				</div>
			</Group>
			<Group label="工序" className="w-[450px]">
				<div className="flex gap-[13px] pl-[18px]">
					<BigButton icon={<Generate />} label="生成刀轨" disabled />
					<BigButton icon={<Verify />} label="确认刀轨" disabled />
					<BigButton icon={<MachineSim />} label="机床仿真" />
					<BigButton icon={<PostProcess />} label="后处理" disabled />
					<BigButton icon={<ShopDoc />} label="车间文档" />
				</div>
				<div className="ml-4">
					<BigButton icon={<More />} label="更多" drop boxed />
				</div>
			</Group>
			<Group label="显示" className="w-[180px]">
				<div className="grid auto-rows-[20px] grid-cols-[32px_18px_36px_16px_40px_12px] items-center justify-items-center gap-y-3 pl-[14px]">
					<Tool icon={I.flashPath} label="编辑显示" className="w-8" />
					<Drop />
					<Tool icon={I.palette} label="刀轨颜色" className="w-8" />
					<Drop />
					<Tool icon={I.pathTarget} label="刀轨位置" className="w-8" />
					<span />
					<Tool icon={I.hatch1} label="显示切削移动" className="w-8" active />
					<span />
					<Tool icon={I.spline} label="显示端点" className="w-8" />
					<span />
					<Tool icon={I.toolHead} label="显示刀具" className="w-8" />
					<Drop />
					<Tool icon={I.hatch2} label="显示非切削移动" className="w-8" active />
					<span />
					<Tool icon={I.circlePt} label="显示圆心" className="w-8" />
					<span />
					<Tool icon={I.linePt} label="显示线" className="w-8" />
					<Drop />
				</div>
			</Group>
			<Group label="动画" className="w-[269px]">
				<div className="grid auto-rows-[20px] grid-cols-[24px_42px_46px] items-center justify-items-center gap-y-3 pl-7">
					<Tool icon={I.play} label="播放" className="row-span-2 w-6 pb-1" />
					<Tool icon={I.first} label="起点" className="w-6" />
					<Tool icon={I.last} label="终点" className="w-6" />
					<Tool icon={I.prevOp} label="上一工序" className="w-6" />
					<Tool icon={I.nextOp} label="下一工序" className="w-6" />
					<Tool icon={I.pause} label="暂停" className="w-6" />
					<Tool icon={I.back} label="反向" className="w-6" />
				</div>
				<div className="flex flex-col items-center pt-2">
					<Select
						id="speed"
						value="5"
						className="h-[30px] w-[115px]"
						selectClass="border-[#a8a8a8] pl-1 text-[16px] text-[#333]"
						caret={<Caret big />}
					/>
					<label htmlFor="speed" className="mt-[15px] text-[16px] leading-5">
						速度
					</label>
				</div>
			</Group>
			<Group label="工件" className="w-[197px]">
				<div className="grid auto-rows-[20px] grid-cols-[36px_36px] items-center justify-items-center gap-y-3 pl-3">
					<Ipw />
					<Ipw inner={cellA} />
					<Ipw bottom={false} />
					<Ipw inner={cellB} bottom={false} />
					<Ipw />
					<Ipw inner={cellA} />
				</div>
				<div className="ml-[7px]">
					<BigButton icon={<ShowIpw />} label="显示 3D IPW" drop />
				</div>
			</Group>
			<Group label="加工工具 - G..." className="w-[142px]">
				<div className="flex flex-col gap-3 pl-[5px]">
					<div className="flex h-5 items-center">
						<Tool icon={<ToolMini kind="check" />} label="检查" className="w-[33px]" />
						<Tool icon={<ToolMini kind="block" />} label="毛坯" className="w-[33px]" />
						<Tool icon={<ToolMini kind="stack" />} label="叠层" className="w-[33px]" />
						<Tool icon={<ToolMini kind="sheet" />} label="表格" className="w-[33px]" />
					</div>
					<div className="flex h-5 items-center">
						<Tool icon={<ToolMini kind="gauge" />} label="测量" className="w-[33px]" />
						<Sep className="mx-1 h-7" />
						<Tool icon={<ToolMini kind="layers" />} label="图层" className="w-[33px]" />
						<Tool icon={<ToolMini kind="doc" />} label="文档" className="w-[33px]" />
					</div>
					<div className="flex h-5 items-center">
						<Tool icon={<ToolMini kind="millList" />} label="列表" className="w-[33px]" />
						<Tool icon={<ToolMini kind="wrench" />} label="定制" className="w-[33px]" />
						<Tool icon={<ToolMini kind="clock" />} label="时间" className="w-[33px]" />
						<Tool icon={<ToolMini kind="report" />} label="报告" className="w-[33px]" />
					</div>
				</div>
			</Group>
			<Group className="w-[62px]">
				<div className="flex flex-1 justify-center">
					<BigButton icon={<Analysis />} label="分析" drop />
				</div>
			</Group>
			<Group className="w-[63px]">
				<div className="flex flex-1 justify-center">
					<BigButton icon={<Plus />} label="几何体" drop />
				</div>
			</Group>
			<Group className="w-[80px]">
				<div className="flex flex-1 justify-center">
					<BigButton icon={<Sync />} label="同步建模" drop />
				</div>
			</Group>
			<Group className="w-[62px]">
				<div className="flex flex-1 justify-center">
					<BigButton icon={<Feature />} label="特征" drop />
				</div>
			</Group>
			<div className="flex flex-1 items-end justify-end pr-[3px] pb-1">
				<Drop />
			</div>
		</div>
	);
}

function Toolbar() {
	return (
		<div className="flex h-[47px] shrink-0 items-center border-b-2 border-[#adadad] bg-white">
			<button type="button" className="ml-[13px] flex w-[111px] shrink-0 items-center gap-[6px] text-[16px] whitespace-nowrap">
				{I.menu}
				<span>
					菜单(<u>M</u>)
				</span>
				<Caret />
			</button>
			<Sep className="mr-3 h-8" />
			<Tool icon={I.navOrder} label="程序顺序视图" />
			<Tool icon={I.navTool} label="机床视图" className="w-[35px]" />
			<Tool icon={I.navGeom} label="几何视图" className="w-[33px]" active />
			<Tool icon={I.navMethod} label="加工方法视图" className="w-[38px]" />
			<Sep className="mr-[14px] ml-2 h-8" />
			<Tool icon={I.wave} label="刀轨" className="w-[33px]" active />
			<Tool icon={I.rough} label="IPW" />
			<Sep className="mr-[18px] ml-[10px] h-8" />
			<Select
				label="选择过滤器"
				value="无选择过滤器"
				className="h-[30px] w-[193px] shrink-0"
				selectClass="border-[#b4b4b4] pl-1 text-[16px] text-[#b4b4b4]"
				caret={<Caret color="#aaa" big />}
			/>
			<Select
				label="选择范围"
				value="整个装配"
				className="mr-1 ml-[13px] h-[30px] w-[203px] shrink-0"
				selectClass="border-[#b4b4b4] pl-1 text-[16px] text-[#b4b4b4]"
				caret={<Caret color="#aaa" big />}
			/>
			<Tool icon={I.selA} label="类型过滤" />
			<Tool icon={I.selB} label="细节过滤" />
			<Tool icon={I.snap} label="捕捉点" className="w-7" />
			<Drop className="w-[22px]" />
			<Tool icon={I.rotAxis} label="旋转点" />
			<Tool icon={I.dispA} label="显示面" />
			<Tool icon={I.cubePick} label="选择体" />
			<Tool icon={I.marquee} label="矩形选择" />
			<Drop />
			<Tool icon={I.shadeGrey} label="着色" />
			<Tool icon={I.blueBox} label="透明盒" />
			<Sep className="mx-[10px] h-8" />
			<Tool icon={I.zoomFit} label="适合窗口" />
			<Tool icon={I.pan} label="平移" />
			<Tool icon={I.rotate} label="旋转" />
			<Tool icon={I.persp} label="透视" />
			<Tool icon={I.listEdit} label="编辑对象" />
			<Tool icon={I.fourWin} label="布局" className="w-10" />
			<Drop />
			<Tool icon={I.clip} label="截面" />
			<Drop />
			<Tool icon={I.solid} label="渲染样式" className="w-10" />
			<Drop />
			<Tool icon={I.sect} label="定向视图" />
			<Drop />
			<Sep className="ml-3 h-8" />
			<div className="ml-auto pt-4 pr-[3px]">
				<Drop />
			</div>
		</div>
	);
}

/* ---------- navigator ---------- */

const gear = (color, center) => (
	<Icon w={20}>
		<circle cx="10" cy="10" r="6" stroke={color} strokeWidth="2.500" />
		<path
			d="M10 0v4M10 16v4M0 10h4M16 10h4M3 3l3 3M14 14l3 3M17 3l-3 3M6 14l-3 3"
			stroke={color}
			strokeWidth="3"
		/>
		<circle cx="10" cy="10" r="1.500" fill={center} />
	</Icon>
);

const resources = [
	{ label: '装配导航器', icon: R.assembly, size: 'h-[60px] mt-[19px]' },
	{ label: '约束导航器', icon: R.constraint, size: 'h-[60px]' },
	{ label: '部件导航器', icon: R.part, size: 'h-[60px]' },
	{ label: '工序导航器', icon: R.opNav, size: 'h-[64px]', active: true },
	{ label: '机床导航器', icon: R.table, size: 'h-[60px]' },
	{ label: '加工特征导航器', icon: R.machine, size: 'h-[61px]' },
	{ label: '重用库', icon: R.books, size: 'h-[62px]' },
	{ label: 'HD3D 工具', icon: R.info, size: 'h-[92px]' },
	{ label: 'Web 浏览器', icon: R.web, size: 'h-[66px]' },
	{ label: '历史记录', icon: R.history, size: 'h-[88px]' },
	{ label: '系统材料', icon: R.wand, size: 'h-[36px]' },
	{ label: '后处理器', icon: R.post, size: 'h-[80px]' },
];

function ResourceBar() {
	return (
		<aside className="flex w-[46px] shrink-0 flex-col overflow-hidden bg-[#dcdcdc] pt-2">
			<button type="button" aria-label="资源条选项" className="flex h-5 w-[43px] shrink-0 items-center justify-center">
				{gear('#3a3a3a', '#3a3a3a')}
			</button>
			<div className="flex flex-1 flex-col pt-[14px]">
				{resources.map((r) => (
					<button
						type="button"
						key={r.label}
						aria-label={r.label}
						className={clsx(
							'flex shrink-0 items-center justify-center',
							r.size,
							r.active ? 'ml-[3px] border-y border-l border-[#a5a5a5] bg-white pl-px' : 'border-r border-[#a5a5a5] pl-[6px]'
						)}
					>
						{r.icon}
					</button>
				))}
			</div>
		</aside>
	);
}

const McsIcon = () => (
	<Icon w={24}>
		<path d="M3 15V4" stroke="#2020a8" strokeWidth="2" />
		<path d="M0 6l3-5 3 5z" fill="#2020a8" />
		<path d="M3 15l10-5" stroke="#2f9a3a" strokeWidth="2" />
		<path d="M10 7l7 1-5 5z" fill="#2f9a3a" />
		<path d="M3 15l9 4" stroke="#c02626" strokeWidth="2" />
		<circle cx="3" cy="15" r="2.500" fill="#c02626" />
		<path d="M11 15l4 5-6 1z" fill="#c02626" />
		<g fill="#333" fontSize="10" fontWeight="700">
			<text x="6" y="8">
				Z
			</text>
			<text x="16" y="10">
				Y
			</text>
			<text x="15" y="23">
				X
			</text>
		</g>
	</Icon>
);

const UnusedIcon = () => (
	<Icon w={22}>
		<path d="M1 3h7l2 2h11v15H1z" fill="#dcd08c" stroke="#857a3c" strokeWidth="1.500" />
		<path d="M9 7h11v12H9z" fill="#f2efd8" />
		<path d="M12 9h5v3h-5M17 12v4h-5v-2" stroke="#4a3a9c" strokeWidth="2" />
	</Icon>
);

const WorkpieceIcon = () => (
	<Icon w={22}>
		<g stroke="#4a5fb4" strokeLinejoin="round">
			<path d="M1 6l6-4 3 2-2 2 4 2 4-3-3-2 3-2 5 3v10l-9 7z" fill="#7088dc" />
			<path d="M1 6l3-2 4 2v4l4 2 9-6v9l-9 6-11-6z" fill="#9db2f2" />
			<path d="M12 12l9-7v9l-9 7z" fill="#6179d2" />
		</g>
	</Icon>
);

const Expander = ({ open, onClick }) => (
	<button
		type="button"
		aria-label={open ? '折叠' : '展开'}
		onClick={onClick}
		className="relative flex h-[13px] w-[13px] shrink-0 items-center justify-center border border-[#d4d4d4] bg-white"
	>
		<Icon w={7}>
			<path d={open ? 'M0 3.500h7' : 'M0 3.500h7M3.500 0v7'} stroke="#222" strokeWidth="1.500" />
		</Icon>
	</button>
);

const DOT_V = 'absolute border-l border-dotted border-[#999]';
const columns = ['刀轨', '刀具', '几何体'];

function Navigator() {
	const [open, setOpen] = useState(true);
	const children = open ? ['MB1', 'MB2', 'MB3', 'MB4'] : [];

	const rows = [
		<span key="root" className="pl-[5px] text-[18px]">
			GEOMETRY
		</span>,
		<span key="unused" className="relative flex h-full items-center pl-[29px] text-[17px]">
			<span className={clsx(DOT_V, 'top-[14px] bottom-0 left-[14px]')} />
			<span className="absolute top-[14px] left-[14px] w-3 border-t border-dotted border-[#999]" />
			<UnusedIcon />
			<span className="ml-[5px]">未用项</span>
		</span>,
		<span key="wb1" className="relative flex h-full items-center pl-2 text-[18px]">
			<span className={clsx(DOT_V, 'top-0 left-[14px] h-2')} />
			<Expander open={open} onClick={() => setOpen(!open)} />
			<span className="mr-[3px] w-[5px] border-t border-dotted border-[#999]" />
			<WorkpieceIcon />
			<span className="ml-[5px]">WB1</span>
		</span>,
		...children.map((name, i) => (
			<span key={name} className="relative flex h-full items-center pl-[35px] text-[18px]">
				<span className={clsx(DOT_V, 'top-0 left-[41px]', i === children.length - 1 ? 'h-4' : 'bottom-0')} />
				<Expander open={false} />
				<span className="mr-[2px] ml-px w-[5px] border-t border-dotted border-[#999]" />
				<McsIcon />
				<span className="ml-1">{name}</span>
			</span>
		)),
	];
	while (rows.length < 26) rows.push(null);

	return (
		<section className="flex w-[690px] shrink-0 flex-col overflow-hidden bg-white pr-[14px] pl-[10px]">
			<div className="flex h-[41px] shrink-0 items-center justify-between pr-[9px] pl-[5px] text-[18px] text-[#333]">
				<h2>工序导航器 - 几何</h2>
				<button type="button" aria-label="最大化面板" className="pt-1">
					<Icon w={18} h={16}>
						<path d="M1 2h16v13H1z" stroke="#222" strokeWidth="1.500" />
						<path d="M1 2h16" stroke="#222" strokeWidth="3" />
					</Icon>
				</button>
			</div>
			<div className="flex-1 overflow-hidden border-l border-[#d8d8d8]">
				<table className="w-full table-fixed border-separate border-spacing-0 text-left text-[#333]">
					<thead className="bg-[#f0f0f0] text-[18px] leading-6">
						<tr className="h-8">
							<th scope="col" className="border-y border-r border-[#dcdcdc] p-0 pt-[3px] pl-2 font-normal">
								名称
							</th>
							{columns.map((c, i) => (
								<th
									scope="col"
									key={c}
									className={clsx(
										'border-y border-r border-[#dcdcdc] p-0 pt-[3px] pl-2 font-normal whitespace-nowrap',
										i === 0 && 'w-[72px]',
										i === 1 && 'w-[144px]',
										i === 2 && 'w-[145px]'
									)}
								>
									{c}
								</th>
							))}
							<th scope="col" aria-label="更多列" className="w-[14px] border-y border-[#dcdcdc] p-0">
								<span className="mt-1 ml-2 block h-3 w-1 border-y-2 border-[#777]" />
							</th>
						</tr>
					</thead>
					<tbody>
						{rows.map((row, i) => (
							<tr key={i} className="h-[29px] bg-white even:bg-[#fafafa]">
								<td className="h-[29px] border-r-2 border-b border-r-[#333] border-b-[#ececec] p-0 leading-7">{row}</td>
								<td className="border-r border-b border-[#ececec]" />
								<td className="border-r border-b border-[#ececec]" />
								<td className="border-r border-b border-[#ececec]" />
								<td className="border-b border-[#ececec]" />
							</tr>
						))}
					</tbody>
				</table>
			</div>
		</section>
	);
}

/* ---------- graphics window ---------- */

function Model() {
	return (
		<svg
			viewBox="744 305 1170 775"
			preserveAspectRatio="xMinYMin slice"
			className="absolute inset-0 h-full w-full"
			role="img"
			aria-label="零件模型"
		>
			<defs>
				<linearGradient id="bore" x1="0" y1="0" x2="1" y2="0">
					<stop offset="0" stopColor="#c23a3c" />
					<stop offset=".55" stopColor="#85292b" />
					<stop offset="1" stopColor="#c43d3e" />
				</linearGradient>
			</defs>
			<g stroke="#4a1c1c" strokeWidth="1.2" strokeLinejoin="round">
				{/* rear block */}
				<path d="M1286 627L1342 549L1336 712L1280 732Z" fill="#c43e3e" />
				<path d="M1200 672L1276 637L1286 627L1282 740L1200 778Z" fill="#b33a3b" />
				<path d="M1276 637L1271 745M1286 627L1282 735" />
				<path d="M1200 509L1342 549L1286 627Q1283 633 1276 637L1200 673Z" fill="#ff6b6b" />
				<ellipse cx="1271" cy="573" rx="46" ry="29" fill="#ff7c7b" />
				<ellipse cx="1271" cy="575" rx="43" ry="26" fill="url(#bore)" />
				{/* left wall */}
				<path d="M930 920L953 945L1147 1080H1240V980L1160 930Z" fill="#a33435" />
				<path d="M952 930V944" />
				<path d="M1223 975L1233 990V1080H1217Z" fill="#b63b3c" />
				{/* front walls */}
				<path d="M1395 1080L1534 1010V1001L1618 960L1612 1080Z" fill="#b43a3b" />
				<path d="M1618 960L1632 944L1626 1080H1612Z" fill="#c9403f" />
				<path d="M1635 785L1579 870Q1573 885 1586 897L1629 930Z" fill="#c94040" />
				{/* main face */}
				<path
					d="M1200 777L1271 740Q1279 736 1283 730L1305 699L1635 785L1579 870Q1573 886 1586 897L1625 926Q1641 944 1618 960L1534 1001V1010L1395 1080H1246Q1229 1068 1230 1050L1233 992Q1233 982 1223 975L1163 933L1150 900Z"
					fill="#ff6b6b"
				/>
				<path
					d="M1232 1018L1388 938Q1416 926 1448 943L1534 1001V1010L1448 951Q1416 934 1388 947L1231 1027Z"
					fill="#a93738"
				/>
				<path d="M1388 938V947M1448 943V951" />
				<ellipse cx="1556" cy="932" rx="21" ry="13" fill="#ff7c7b" />
				<ellipse cx="1556" cy="934" rx="19" ry="11" fill="url(#bore)" />
				<ellipse cx="1306" cy="1074" rx="24" ry="14" fill="#ff7c7b" />
				<ellipse cx="1306" cy="1077" rx="21" ry="14" fill="url(#bore)" />
			</g>
			{/* machine coordinate system */}
			<g strokeWidth="2" fontSize="19" fontFamily="Liberation Sans, Arial, sans-serif">
				<path d="M1324 916L1329 820" stroke="#2222cf" />
				<path d="M1330 799L1324 821Q1329 825 1335 821Z" fill="#1a26a8" />
				<path d="M1324 916L1244 861" stroke="#6f7a34" />
				<path d="M1225 848L1247 856Q1247 862 1240 866Z" fill="#22a23c" />
				<path d="M1324 916L1414 871" stroke="#c13b3f" />
				<path d="M1435 861L1410 868Q1409 874 1414 877Z" fill="#d23338" />
				<text x="1300" y="794" fill="#5a3fe0">
					ZM
				</text>
				<text x="1226" y="840" fill="#7f8d3a">
					YM
				</text>
				<text x="1411" y="854" fill="#b5403f">
					XM
				</text>
			</g>
		</svg>
	);
}

function Section({ title, children, className }) {
	return (
		<section className={clsx('border-b-2 border-[#d2d2d2] bg-white px-[10px]', className)}>
			<div className="flex h-9 items-center justify-between text-[20px] text-[#1f6f86]">
				<h3>{title}</h3>
				<button type="button" aria-label={`折叠${title}`}>
					<Icon w={16} h={14}>
						<path d="M2 12L8 3l6 9" stroke="#1f6f86" strokeWidth="2.500" />
					</Icon>
				</button>
			</div>
			{children}
		</section>
	);
}

const Slab = ({ side, face = '#fbf7a6', top = '#fbf7a6' }) => (
	<Icon w={32} h={30}>
		<g stroke="#111" strokeWidth="1.500" strokeLinejoin="round">
			<path d="M1 1h15l4 4H5z" fill={top} />
			<path d="M1 1l4 4v9l6 5v-8l5 4v13L1 15z" fill={side} />
			<path d="M5 5h15v5h-9v6l-6-3z" fill="#fff" />
			<path d="M11 10h14l6 5H16z" fill={top} />
			<path d="M16 15h15v13H16z" fill={face} />
		</g>
	</Icon>
);

const subtypes = [
	{
		label: 'WORKPIECE',
		icon: <Slab side="#7d7dfa" />,
	},
	{
		label: 'MILL_AREA',
		icon: (
			<Icon w={32} h={30}>
				<g stroke="#111" strokeWidth="1.500" strokeLinejoin="round">
					<path d="M1 3v11l15 14q1-6-3-10T1 3z" fill="#7c7a1a" />
					<path d="M1 3q2-2 5-2h11q5 2 5 8t9 8l-8 2H17q-5-1-6-8T1 3z" fill="#0f8282" />
					<path d="M16 28q-1-9 5-9h7q3 1 3 4v5z" fill="#fbfad0" />
				</g>
			</Icon>
		),
	},
	{
		label: 'MILL_BND',
		icon: (
			<Icon w={32} h={30}>
				<path d="M4 6h18l8 17H13z" fill="#fdf0c4" stroke="#7a2f6c" strokeWidth="1.500" />
				<path d="M10 1l5 6M30 9l-6 6M3 18l6-5M18 22l4 6" stroke="#7a2f6c" strokeWidth="1.500" />
				<circle cx="4" cy="6" r="2.500" fill="#fff" stroke="#7a2f6c" strokeWidth="1.500" />
			</Icon>
		),
	},
	{
		label: 'MILL_TEXT',
		icon: <span className="text-[38px] leading-[30px] font-bold text-[#1414d8] font-['Liberation_Serif',serif]">A</span>,
	},
	{
		label: 'HOLE_BOSS_GEOM',
		icon: (
			<Icon w={36} h={34}>
				<g stroke="#111" strokeWidth="1.500" strokeLinejoin="round">
					<path d="M1 7l15 14v11L1 18z" fill="#8a8834" />
					<path d="M1 7h18l16 14H16z" fill="#fff" />
					<path d="M16 21h19v11H16z" fill="#f4f19a" />
					<path d="M12 3v12q4 3 9 0V3z" fill="#e8e6c0" />
					<ellipse cx="16.500" cy="3.500" rx="4.500" ry="2.500" fill="#fff" />
					<ellipse cx="26" cy="17" rx="2.500" ry="1.500" fill="#555" />
				</g>
			</Icon>
		),
	},
];

function CreateGeometryDialog() {
	const nameRef = useRef(null);

	useEffect(() => {
		nameRef.current.focus();
		nameRef.current.select();
	}, []);

	return (
		<div
			role="dialog"
			aria-label="创建几何体"
			className="absolute top-[73px] left-0 w-[473px] bg-[#efefef] text-[17px] text-[#333]"
		>
			<div className="flex h-9 items-center bg-[#57a0b8] pr-[14px] pl-[9px] text-white">
				{gear('#fff', '#fff')}
				<h2 className="ml-3 flex-1 text-[20px]">创建几何体</h2>
				<button type="button" aria-label="关闭">
					<Icon w={18}>
						<path d="M1 1l16 16M17 1L1 17" stroke="#fff" strokeWidth="3" />
					</Icon>
				</button>
			</div>
			<div className="flex flex-col gap-[5px] px-2 pt-[5px]">
				<Section title="类型" className="h-[92px]">
					<Select
						label="类型"
						value="mill_planar"
						className="mx-[3px] mt-2 h-9"
						selectClass="border-[#a8a8a8] pl-[6px] text-[18px]"
						caret={<Caret big />}
					/>
				</Section>
				<Section title="几何体子类型" className="relative h-[157px]">
					<span className="absolute top-[22px] left-[71px] h-[84px] w-[84px] rounded-full bg-[#ffff00] mix-blend-multiply" />
					<div className="relative flex items-center pt-3 pl-[72px]">
						<button
							type="button"
							aria-label="MCS"
							className="mr-px flex h-[46px] w-[46px] items-center justify-center bg-[#9ccb2c]"
						>
							<Icon w={36}>
								<text x="18" y="9" textAnchor="middle" fontSize="10" fontWeight="700" fill="#1c2c8c">
									MCS
								</text>
								<path d="M16 12v12h12M16 24l-9 9" stroke="#22369c" strokeWidth="2" />
								<path d="M13 16l3-5 3 5zM6 28v6h6z" fill="#22369c" />
							</Icon>
						</button>
						{subtypes.map((s) => (
							<button
								type="button"
								key={s.label}
								aria-label={s.label}
								className="flex h-[46px] w-[49px] items-center justify-center"
							>
								{s.icon}
							</button>
						))}
					</div>
					<div className="relative mt-3 pl-[79px]">
						<button type="button" aria-label="MILL_GEOM">
							<Slab side="#7c7a2c" top="#f7f6d6" />
						</button>
					</div>
					<span
						role="tooltip"
						className="absolute top-[96px] left-[113px] flex h-[50px] w-[65px] items-center justify-center border border-[#b4b4b4] bg-white text-[18px] text-[#555] shadow-[4px_4px_3px_rgba(0,0,0,0.5)]"
					>
						MCS
					</span>
					<span className="absolute top-[64px] left-[112px]">
						<Icon w={19} h={30}>
							<path d="M1 1v23l5-5 5 9 4-2-4-9h7z" fill="#fff" stroke="#444" strokeWidth="1.200" />
						</Icon>
					</span>
				</Section>
				<Section title="位置" className="h-[92px]">
					<div className="mx-[3px] mt-[7px] flex items-center justify-between">
						<label htmlFor="parent">几何体</label>
						<Select
							id="parent"
							value="GEOMETRY"
							className="h-9 w-[204px]"
							selectClass="border-[#a8a8a8] pl-[6px] text-[18px]"
							caret={<Caret big />}
						/>
					</div>
				</Section>
				<Section title="名称" className="h-[90px]">
					<div className="mx-[3px] mt-[7px] flex h-[33px] items-center border border-[#a8a8a8] bg-white px-[6px]">
						<input
							ref={nameRef}
							type="text"
							aria-label="名称"
							defaultValue="MCS"
							className="w-full text-[18px] leading-6 outline-none selection:bg-[#0f74d0] selection:text-white"
						/>
					</div>
				</Section>
			</div>
			<div className="flex justify-end gap-[7px] pt-4 pr-[23px] pb-4">
				<button type="button" className="h-9 w-[78px] bg-[#76b3c4] text-white">
					确定
				</button>
				<button type="button" className="h-9 w-[78px] border border-[#a8a8a8] bg-[#dedede]">
					应用
				</button>
				<button type="button" className="h-9 w-[78px] border border-[#a8a8a8] bg-[#dedede]">
					取消
				</button>
			</div>
		</div>
	);
}

function Graphics() {
	return (
		<main className="flex min-w-0 flex-1 flex-col border-l-2 border-[#9aa5b4]">
			<div className="flex h-[33px] shrink-0 border-b-2 border-[#4b8fa9] bg-white">
				<div className="flex w-[252px] items-center bg-[#57a0b8] pl-2 text-[18px] whitespace-nowrap text-white">
					<Icon w={24}>
						<path d="M3 2h6v15H3z" fill="#4a50c8" stroke="#20246c" />
						<path d="M11 6h12l-5 4h-7M11 13h6" stroke="#335" strokeWidth="1.500" />
						<path d="M2 19h8l-4 4z" fill="#f4e65c" />
					</Icon>
					<span className="ml-1">02-硬件钢料产品.prt</span>
					<span className="ml-2">
						<Icon w={16}>
							<path d="M9 2H2v12h10V9" stroke="#fff" strokeWidth="2.500" />
							<path d="M6 11l1-4 6-5 2 2-5 6z" fill="#fff" />
						</Icon>
					</span>
					<button type="button" aria-label="关闭文件" className="ml-2">
						<Icon w={12}>
							<path d="M1 1l10 10M11 1L1 11" stroke="#a9b6bd" strokeWidth="2.500" />
						</Icon>
					</button>
				</div>
			</div>
			<div className="relative flex-1 overflow-hidden bg-linear-to-b from-[#26234f] from-5% via-[#18466f] via-45% to-[#0b6c99] to-95%">
				<Model />
				<CreateGeometryDialog />
			</div>
		</main>
	);
}

export default function App() {
	return (
		<div className="flex h-screen min-w-[1200px] flex-col overflow-hidden border-x-2 border-t-2 border-[#b4b4b4] bg-white px-1 font-['Open_Sans','Noto_Sans_CJK_SC',sans-serif]">
			<TitleBar />
			<TabBar />
			<Ribbon />
			<Toolbar />
			<div className="flex min-h-0 flex-1">
				<ResourceBar />
				<Navigator />
				<Graphics />
			</div>
		</div>
	);
}
